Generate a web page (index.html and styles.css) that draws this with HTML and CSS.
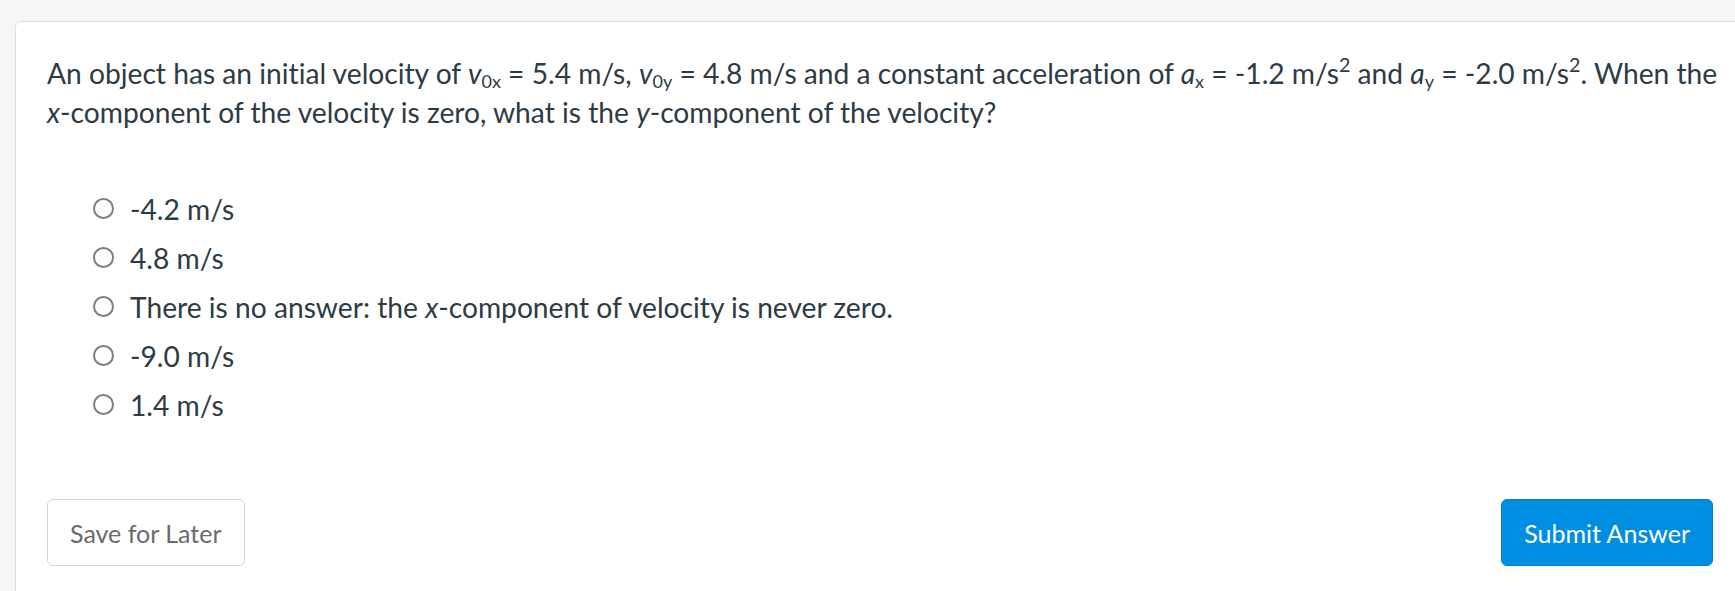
FILE: index.html
```html
<!DOCTYPE html>
<html>
<head>
<meta charset="utf-8">
<link rel="stylesheet" href="styles.css">
</head>
<body>
<div class="page">
  <div class="card">
    <p class="question">An object has an initial velocity of <i>v</i><sub>0x</sub> = 5.4 m/s, <i>v</i><sub>0y</sub> = 4.8 m/s and a constant acceleration of <i>a</i><sub>x</sub> = -1.2 m/s<sup>2</sup> and <i>a</i><sub>y</sub> = -2.0 m/s<sup>2</sup>. When the <i>x</i>-component of the velocity is zero, what is the <i>y</i>-component of the velocity?</p>
    <ul class="options">
      <li class="option"><span class="radio"></span><span class="label">-4.2 m/s</span></li>
      <li class="option"><span class="radio"></span><span class="label">4.8 m/s</span></li>
      <li class="option"><span class="radio"></span><span class="label">There is no answer: the <i>x</i>-component of velocity is never zero.</span></li>
      <li class="option"><span class="radio"></span><span class="label">-9.0 m/s</span></li>
      <li class="option"><span class="radio"></span><span class="label">1.4 m/s</span></li>
    </ul>
    <div class="actions">
      <button class="btn btn-secondary">Save for Later</button>
      <button class="btn btn-primary">Submit Answer</button>
    </div>
  </div>
</div>
</body>
</html>
```

FILE: styles.css
```css
html, body {
  margin: 0;
  padding: 0;
  background: #f6f6f6;
  overflow: hidden;
}
body {
  font-family: Lato, "Liberation Sans", sans-serif;
  color: #2d3b45;
  font-variant-ligatures: none;
}
.page {
  padding: 21px 0 0 15px;
}
.card {
  background: #fff;
  border: 1px solid #dedede;
  border-radius: 6px;
  margin-right: -10px;
  padding: 32px 31px 40px 31px;
  min-height: 600px;
}
.question {
  margin: 0 -30px 0 0;
  font-size: 28.2px;
  line-height: 39px;
}
.question i, .label i {
  font-style: italic;
}
sub {
  font-size: 0.64em;
  vertical-align: -0.22em;
  line-height: 0;
  font-style: normal;
}
sup {
  font-size: 0.7em;
  vertical-align: 0.6em;
  line-height: 0;
}
.options {
  list-style: none;
  margin: 52px 0 0 0;
  padding: 0 0 0 46px;
}
.option {
  display: flex;
  align-items: center;
  gap: 16px;
  height: 49px;
  font-size: 28.2px;
}
.radio {
  width: 17px;
  height: 17px;
  border: 2px solid #7d7d7d;
  border-radius: 50%;
  flex: none;
}
.actions {
  display: flex;
  justify-content: space-between;
  align-items: center;
  margin-top: 70px;
}
.btn {
  font-family: Lato, "Liberation Sans", sans-serif;
  font-size: 25px;
  height: 67px;
  border-radius: 6px;
  padding: 0 22px;
  cursor: pointer;
}
.btn-secondary {
  background: #fff;
  color: #6b6b6b;
  border: 1px solid #d5d5d5;
}
.btn-primary {
  background: #008ee2;
  color: #fff;
  border: 1px solid #0080cc;
}
```
